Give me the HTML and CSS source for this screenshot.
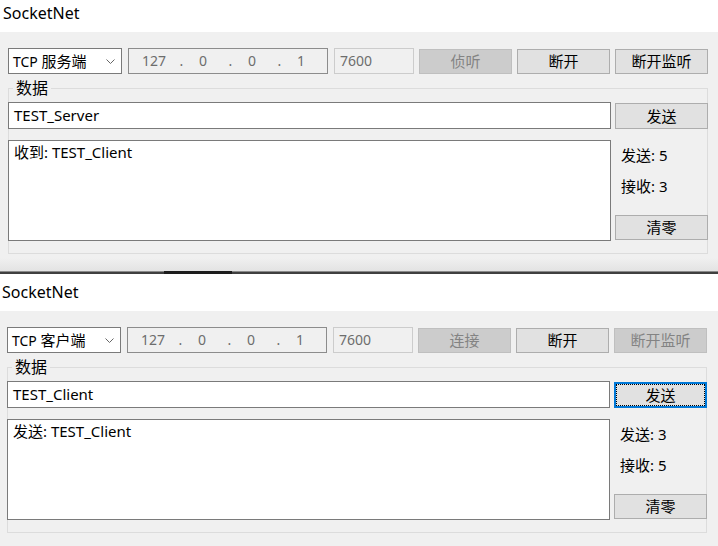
FILE: index.html
```html
<!DOCTYPE html>
<html lang="zh-CN">
<head>
<meta charset="utf-8">
<title>SocketNet</title>
<link rel="stylesheet" href="styles.css">
</head>
<body>
<div class="win win-first">
  <div class="title">SocketNet</div>
  <div class="client">
    <div class="toolbar">
      <div class="combo"><span>TCP <span class="cjk">服务端</span></span><svg class="chev" width="9" height="5" viewBox="0 0 9 5"><polyline points="0.5,0.5 4.5,4.5 8.5,0.5" fill="none" stroke="#666" stroke-width="1"/></svg></div>
      <div class="ip"><span class="oct">127</span><span class="dot">.</span><span class="oct">0</span><span class="dot">.</span><span class="oct">0</span><span class="dot">.</span><span class="oct">1</span></div>
      <div class="port">7600</div>
      <div class="btn tb disabled">侦听</div>
      <div class="btn tb">断开</div>
      <div class="btn tb">断开监听</div>
    </div>
    <div class="group">
      <div class="group-label">数据</div>
      <div class="send-row">
        <div class="textbox">TEST_Server</div>
        <div class="btn send">发送</div>
      </div>
      <div class="log-row">
        <div class="log">收到: TEST_Client</div>
        <div class="side">
          <div class="stat">发送: 5</div>
          <div class="stat">接收: 3</div>
          <div class="btn clear">清零</div>
        </div>
      </div>
    </div>
  </div>
  <div class="shadow"></div>
  <div class="splitter"><span class="grip"></span></div>
</div>
<div class="win win-second">
  <div class="title">SocketNet</div>
  <div class="client">
    <div class="toolbar">
      <div class="combo"><span>TCP <span class="cjk">客户端</span></span><svg class="chev" width="9" height="5" viewBox="0 0 9 5"><polyline points="0.5,0.5 4.5,4.5 8.5,0.5" fill="none" stroke="#666" stroke-width="1"/></svg></div>
      <div class="ip"><span class="oct">127</span><span class="dot">.</span><span class="oct">0</span><span class="dot">.</span><span class="oct">0</span><span class="dot">.</span><span class="oct">1</span></div>
      <div class="port">7600</div>
      <div class="btn tb disabled">连接</div>
      <div class="btn tb">断开</div>
      <div class="btn tb disabled">断开监听</div>
    </div>
    <div class="group">
      <div class="group-label">数据</div>
      <div class="send-row">
        <div class="textbox">TEST_Client</div>
        <div class="btn send focus">发送</div>
      </div>
      <div class="log-row">
        <div class="log">发送: TEST_Client</div>
        <div class="side">
          <div class="stat">发送: 3</div>
          <div class="stat">接收: 5</div>
          <div class="btn clear">清零</div>
        </div>
      </div>
    </div>
  </div>
</div>
</body>
</html>
```
FILE: styles.css
```css
html, body {
  margin: 0;
  padding: 0;
}
body {
  width: 718px;
  height: 546px;
  overflow: hidden;
  background: #ffffff;
  color: #000000;
  font-family: "Noto Sans", "Noto Sans CJK SC", sans-serif;
  font-size: 15px;
}
.win-first {
  margin-top: -5px;
}
.title {
  height: 37px;
  box-sizing: border-box;
  padding: 8px 0 0 3px;
  font-size: 16px;
  line-height: 20px;
  background: #ffffff;
}
.win-second .title {
  padding-left: 2px;
}
.client {
  background: #f0f0f0;
  padding: 16px 0 4px 8px;
}
.win-second .client {
  padding-left: 7px;
  padding-bottom: 20px;
}
.toolbar {
  display: flex;
  align-items: flex-start;
  height: 26px;
}
.combo {
  width: 114px;
  height: 26px;
  box-sizing: border-box;
  border: 1px solid #7a7a7a;
  background: #ffffff;
  display: flex;
  align-items: center;
  padding: 0 6px 0 4px;
  font-size: 14px;
  line-height: 18px;
}
.cjk {
  font-size: 15px;
}
.chev {
  margin-left: auto;
}
.ip {
  margin-left: 6px;
  width: 200px;
  height: 26px;
  box-sizing: border-box;
  border: 1px solid #8c8c8c;
  background: #f0f0f0;
  display: flex;
  align-items: center;
  padding-left: 10px;
  color: #6d6d6d;
  font-size: 14px;
  line-height: 18px;
}
.oct {
  width: 30px;
  text-align: center;
}
.dot {
  width: 19px;
  box-sizing: border-box;
  padding-left: 6px;
  text-align: center;
}
.port {
  margin-left: 6px;
  width: 80px;
  height: 26px;
  box-sizing: border-box;
  border: 1px solid #cccccc;
  background: #f0f0f0;
  display: flex;
  align-items: center;
  padding-left: 5px;
  color: #6d6d6d;
  font-size: 14px;
  line-height: 18px;
}
.btn {
  width: 93px;
  height: 25px;
  box-sizing: border-box;
  border: 1px solid #adadad;
  background: #e1e1e1;
  display: flex;
  align-items: center;
  justify-content: center;
  font-size: 15px;
  line-height: 18px;
  padding-bottom: 1px;
}
.btn.disabled {
  background: #cccccc;
  border-color: #bfbfbf;
  color: #838383;
}
.btn.tb {
  margin-left: 5px;
  margin-top: 1px;
}
.btn.focus {
  position: relative;
  border: 2px solid #0078d7;
}
.btn.focus::after {
  content: "";
  position: absolute;
  inset: 0;
  border: 1px dotted #000000;
}
.group {
  margin-top: 14px;
  width: 700px;
  box-sizing: border-box;
  border: 1px solid #dcdcdc;
  padding-bottom: 12px;
}
.group-label {
  width: fit-content;
  height: 18px;
  margin: -10px 0 0 4px;
  padding: 0 3px;
  background: #f0f0f0;
  font-size: 16px;
  line-height: 18px;
}
.send-row {
  display: flex;
  gap: 4px;
  margin: 5px -1px 0 -1px;
}
.textbox {
  width: 603px;
  height: 27px;
  box-sizing: border-box;
  border: 1px solid #7a7a7a;
  background: #ffffff;
  padding: 0 5px 1px;
  display: flex;
  align-items: center;
  line-height: 20px;
}
.btn.send {
  height: 26px;
  margin-top: 1px;
}
.log-row {
  display: flex;
  gap: 4px;
  margin: 11px -1px 0 -1px;
}
.log {
  width: 603px;
  height: 101px;
  box-sizing: border-box;
  border: 1px solid #7a7a7a;
  background: #ffffff;
  padding: 1px 5px;
  line-height: 20px;
}
.side {
  width: 93px;
  display: flex;
  flex-direction: column;
}
.stat {
  height: 31px;
  line-height: 31px;
  padding-left: 6px;
}
.btn.clear {
  margin-top: 13px;
}
.shadow {
  height: 13px;
  background: linear-gradient(#f0f0f0, #e3e3e3);
}
.splitter {
  position: relative;
  height: 3px;
  background: linear-gradient(#8a8a8a 0 1px, #3f3f3f 1px 3px);
}
.grip {
  position: absolute;
  left: 164px;
  top: 0;
  width: 68px;
  height: 3px;
  background: #1c1c1c;
}
```
